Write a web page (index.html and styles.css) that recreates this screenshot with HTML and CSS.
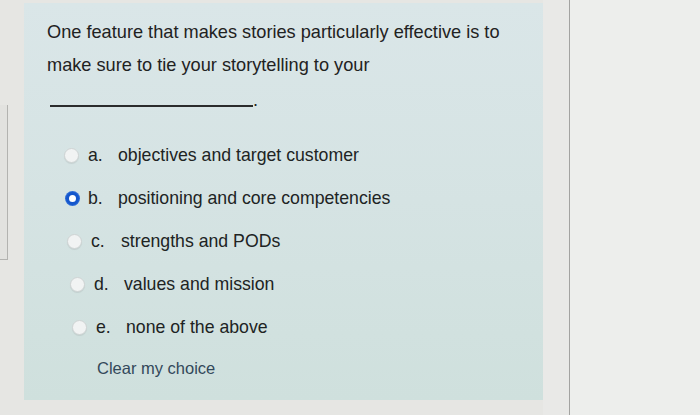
FILE: index.html
```html
<!DOCTYPE html>
<html lang="en">
<head>
<meta charset="utf-8">
<title>Question</title>
<link rel="stylesheet" href="styles.css">
</head>
<body>
<div class="page">
  <div class="leftcol"><div class="sidebox"></div></div>
  <div class="panel">
    <div class="qtext">
      <p>One feature that makes stories particularly effective is to make sure to tie your storytelling to your</p>
      <p class="blankline"><span class="blank"></span>.</p>
    </div>
    <div class="answers">
      <label class="opt o1"><span class="radio"></span><span class="letter">a.</span><span class="txt">objectives and target customer</span></label>
      <label class="opt o2"><span class="radio checked"></span><span class="letter">b.</span><span class="txt">positioning and core competencies</span></label>
      <label class="opt o3"><span class="radio"></span><span class="letter">c.</span><span class="txt">strengths and PODs</span></label>
      <label class="opt o4"><span class="radio"></span><span class="letter">d.</span><span class="txt">values and mission</span></label>
      <label class="opt o5"><span class="radio"></span><span class="letter">e.</span><span class="txt">none of the above</span></label>
    </div>
    <a class="clear">Clear my choice</a>
  </div>
  <div class="gutter"></div>
  <div class="rightcol"></div>
</div>
</body>
</html>
```
FILE: styles.css
```css
html, body {
  margin: 0;
  padding: 0;
  width: 700px;
  height: 415px;
  overflow: hidden;
  background: #e6e6e3;
  font-family: "Liberation Sans", Arial, sans-serif;
}
.page {
  display: flex;
  height: 415px;
}
.leftcol {
  width: 8px;
  flex: none;
}
.sidebox {
  margin-top: 105px;
  height: 154px;
  border-right: 1px solid #b3b3b0;
  border-bottom: 1px solid #b3b3b0;
  background: #e2e2df;
}
.panel {
  flex: none;
  width: 519px;
  height: 397px;
  margin-top: 3px;
  margin-left: 16px;
  padding-left: 23px;
  box-sizing: border-box;
  background: linear-gradient(180deg, #dae6e8 0%, #d5e3e3 50%, #cfe0dd 100%);
  color: #1f2222;
}
.qtext {
  font-size: 18.2px;
  line-height: 33px;
  padding-top: 13px;
  width: 470px;
}
.qtext p {
  margin: 0;
}
.blankline {
  margin-top: 5px !important;
  padding-left: 3px;
  line-height: 26px;
}
.blank {
  display: inline-block;
  width: 203px;
  border-bottom: 2px solid #2a2c2c;
  vertical-align: -1px;
}
.answers {
  margin-top: 31px;
  display: flex;
  flex-direction: column;
  gap: 21px;
}
.opt {
  display: flex;
  align-items: center;
  height: 22px;
  font-size: 17.7px;
  color: #202323;
}
.o1 { padding-left: 17px; }
.o2 { padding-left: 18px; }
.o3 { padding-left: 20px; }
.o4 { padding-left: 23px; }
.o5 { padding-left: 25px; }
.radio {
  width: 13px;
  height: 13px;
  border-radius: 50%;
  background: #f1f3f3;
  border: 1px solid #cfd4d4;
  box-shadow: 0 1px 1px rgba(0,0,0,0.08);
  flex: none;
  margin-right: 9px;
}
.radio.checked {
  width: 7px;
  height: 7px;
  border: 3px solid #1557cc;
  background: #ffffff;
  box-shadow: 0 0 0 1px #2c6bd6;
  margin-left: 1px;
  margin-right: 9px;
}
.letter {
  width: 30px;
  flex: none;
}
.clear {
  display: block;
  margin-top: 21px;
  margin-left: 50px;
  font-size: 16.5px;
  color: #33485a;
}
.gutter {
  width: 26px;
  flex: none;
  background: #e9e9e7;
}
.rightcol {
  flex: 1;
  border-left: 1px solid #a3a3a1;
  background: #edeeec;
}
```
